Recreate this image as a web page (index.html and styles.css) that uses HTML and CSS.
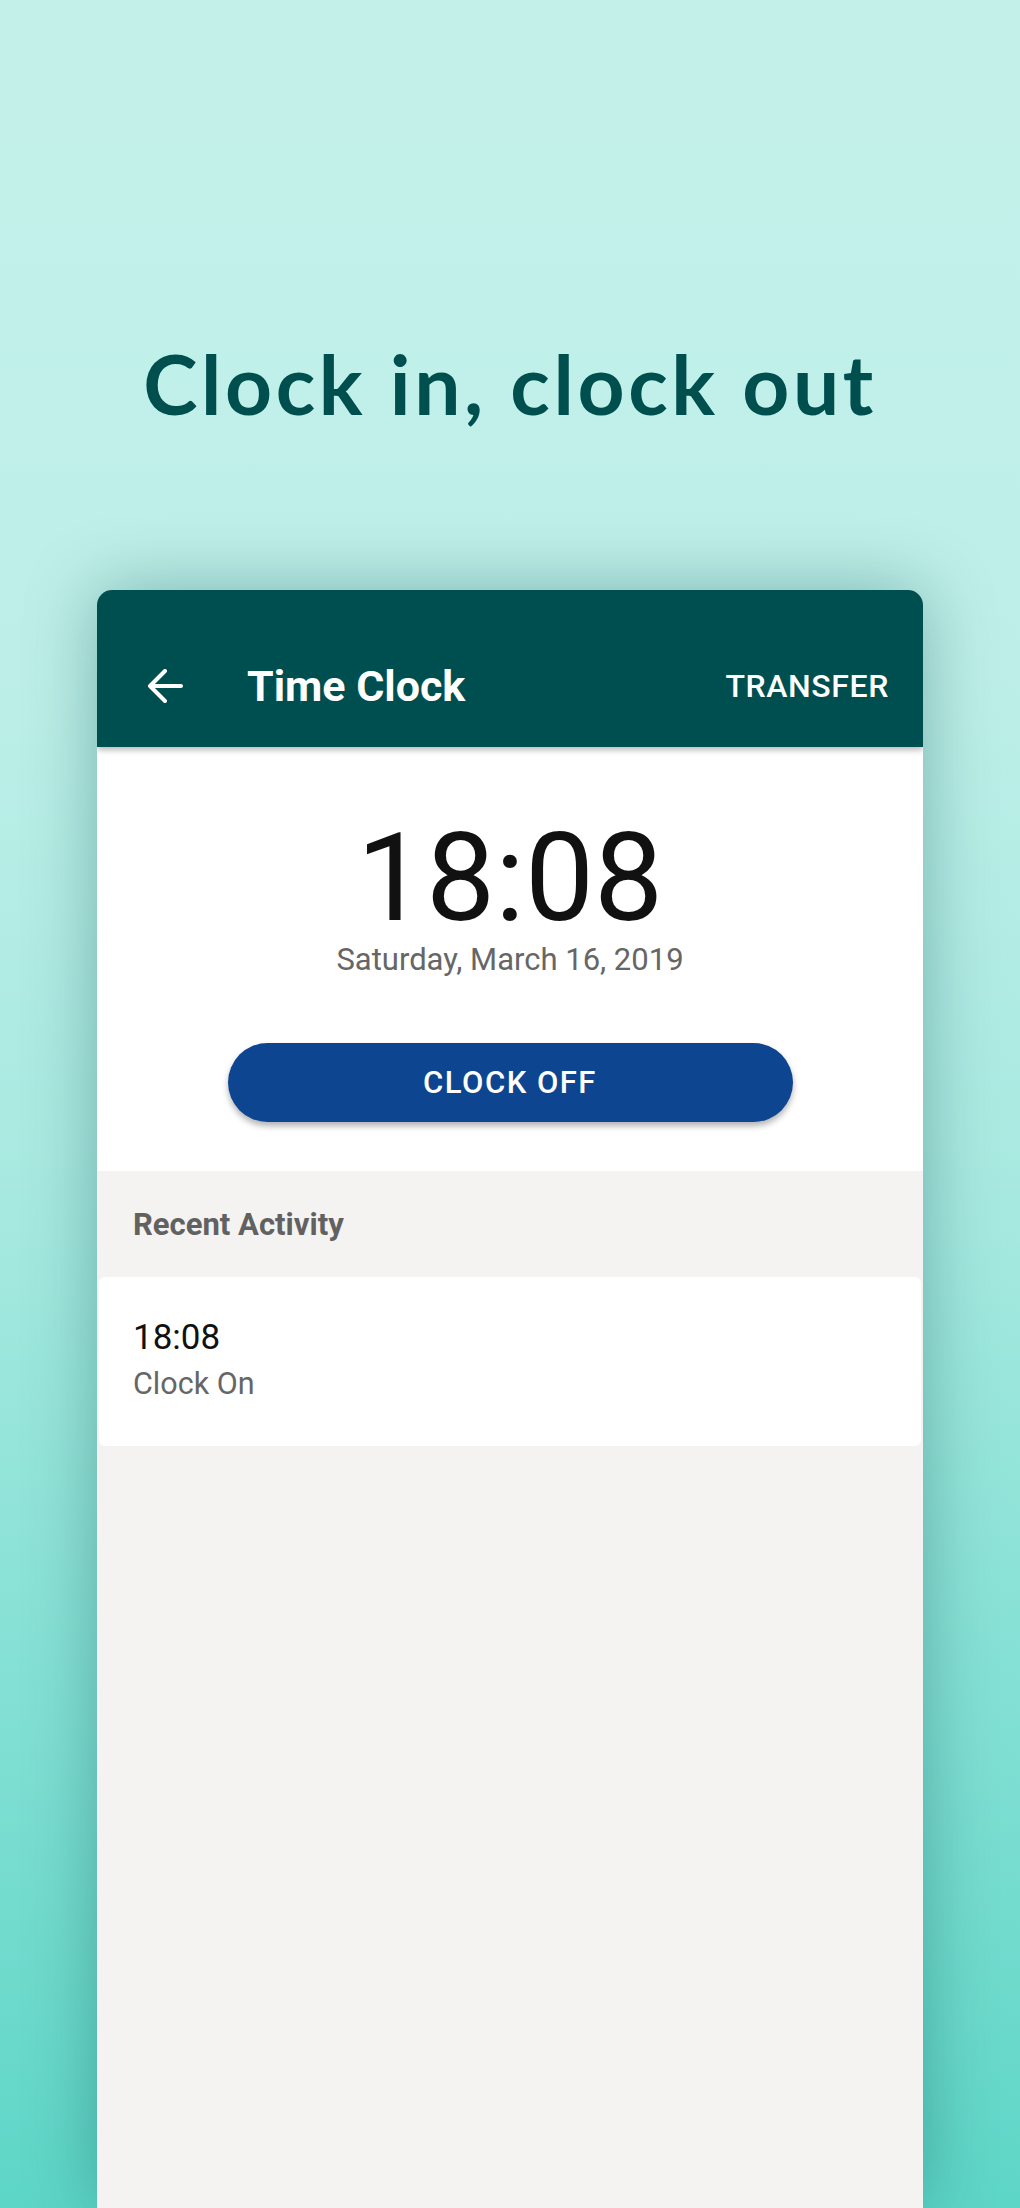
FILE: index.html
```html
<!DOCTYPE html>
<html lang="en">
<head>
<meta charset="utf-8">
<title>Screenshot</title>
<link rel="stylesheet" href="styles.css">
</head>
<body>
<main class="screen">
  <h1 class="headline">Clock in, clock out</h1>
  <section class="phone">
    <header class="appbar">
      <svg class="back" width="36" height="34" viewBox="0 0 36 34" aria-hidden="true">
        <path d="M3 17 H34 M18 2 L3 17 L18 32" fill="none" stroke="#fff" stroke-width="4" stroke-linecap="round" stroke-linejoin="round"/>
      </svg>
      <span class="appbar-title">Time Clock</span>
      <span class="appbar-action">TRANSFER</span>
    </header>
    <div class="clock-panel">
      <div class="clock-time">18:08</div>
      <div class="clock-date">Saturday, March 16, 2019</div>
      <button class="clock-btn">CLOCK OFF</button>
    </div>
    <div class="section-label">Recent Activity</div>
    <div class="activity">
      <div class="activity-time">18:08</div>
      <div class="activity-kind">Clock On</div>
    </div>
  </section>
</main>
</body>
</html>
```
FILE: styles.css
```css
html, body {
  margin: 0;
  padding: 0;
}
body {
  width: 1020px;
  height: 2208px;
  overflow: hidden;
  background: linear-gradient(180deg, #c3f1ea 0%, #bdefe8 30%, #a6e9e0 55%, #5dd6c7 100%);
  font-family: Roboto, "Liberation Sans", sans-serif;
}
.screen {
  display: flex;
  flex-direction: column;
  align-items: center;
  height: 2208px;
}
.headline {
  margin: 342px 0 0 0;
  height: 82px;
  line-height: 82px;
  font-family: Lato, "Open Sans", sans-serif;
  font-weight: 700;
  font-size: 82px;
  color: #004f4f;
  letter-spacing: 3.6px;
}
.phone {
  margin-top: 166px;
  width: 826px;
  flex: 1;
  background: #f4f3f1;
  border-radius: 15px 15px 0 0;
  box-shadow: 0 0 70px rgba(0, 70, 70, 0.35);
  display: flex;
  flex-direction: column;
  overflow: hidden;
}
.appbar {
  position: relative;
  z-index: 2;
  height: 122px;
  padding: 35px 34px 0 50px;
  background: #004f50;
  display: flex;
  align-items: center;
  color: #fff;
  box-shadow: 0 3px 6px rgba(0, 0, 0, 0.28);
}
.back {
  flex: none;
}
.appbar-title {
  margin-left: 64px;
  font-size: 43px;
  line-height: 50px;
  font-weight: 700;
}
.appbar-action {
  margin-left: auto;
  font-size: 32px;
  line-height: 40px;
  font-weight: 500;
  letter-spacing: 0.6px;
}
.clock-panel {
  background: #fff;
  display: flex;
  flex-direction: column;
  align-items: center;
  padding: 70px 0 49px;
}
.clock-time {
  font-size: 123px;
  line-height: 123px;
  color: #111;
}
.clock-date {
  margin-top: 4px;
  font-size: 31px;
  line-height: 31px;
  color: #666;
}
.clock-btn {
  margin-top: 68px;
  width: 565px;
  height: 79px;
  border: 0;
  border-radius: 40px;
  background: #0e4590;
  color: #fff;
  font-family: Roboto, "Liberation Sans", sans-serif;
  font-size: 31px;
  font-weight: 500;
  letter-spacing: 1.5px;
  box-shadow: 0 4px 6px rgba(0, 0, 0, 0.3);
}
.section-label {
  height: 106px;
  display: flex;
  align-items: center;
  padding-left: 36px;
  font-size: 31px;
  font-weight: 700;
  color: #616161;
}
.activity {
  margin: 0 2px;
  background: #fff;
  border-radius: 6px;
  padding: 44px 34px 47px;
  display: flex;
  flex-direction: column;
  gap: 14px;
}
.activity-time {
  font-size: 35px;
  line-height: 34px;
  color: #111;
}
.activity-kind {
  font-size: 30.5px;
  line-height: 30px;
  color: #666;
}
```
